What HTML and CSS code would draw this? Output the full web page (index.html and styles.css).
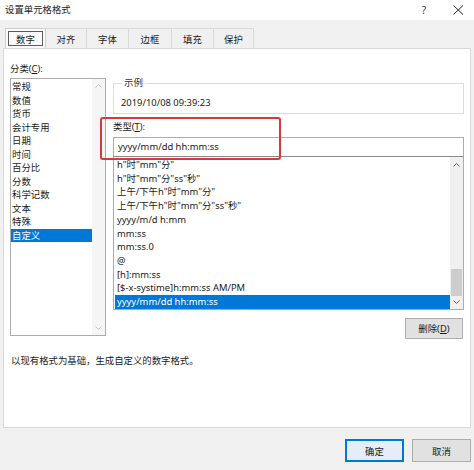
FILE: index.html
```html
<!DOCTYPE html>
<html lang="zh-CN">
<head>
    <meta charset="UTF-8">
    <title>设置单元格格式</title>
    <link rel="stylesheet" href="styles.css">
</head>
<body>
    <div class="dialog">
        <div class="titlebar">
            <span class="title">设置单元格格式</span>
            <span class="help">?</span>
            <svg class="close" width="11" height="10" viewBox="0 0 11 10"><path d="M0.5 0.5 L10 9.5 M10 0.5 L0.5 9.5" stroke="#222" stroke-width="1" fill="none"/></svg>
        </div>

        <div class="tabs">
            <div class="tab active" style="width:41px"><span>数字</span></div>
            <div class="tab" style="width:42px"><span>对齐</span></div>
            <div class="tab" style="width:43px"><span>字体</span></div>
            <div class="tab" style="width:44px"><span>边框</span></div>
            <div class="tab" style="width:43px"><span>填充</span></div>
            <div class="tab" style="width:41px"><span>保护</span></div>
        </div>

        <div class="panel">
            <div class="cols">
                <div class="left">
                    <div class="label">分类(<u>C</u>):</div>
                    <div class="listbox cat">
                        <ul class="items">
                            <li>常规</li>
                            <li>数值</li>
                            <li>货币</li>
                            <li>会计专用</li>
                            <li>日期</li>
                            <li>时间</li>
                            <li>百分比</li>
                            <li>分数</li>
                            <li>科学记数</li>
                            <li>文本</li>
                            <li>特殊</li>
                            <li class="sel">自定义</li>
                        </ul>
                        <div class="vscroll off">
                            <svg class="arrow" width="7" height="4" viewBox="0 0 7 4"><path d="M0.5 3.5 L3.5 0.5 L6.5 3.5" stroke="#c4c4c4" fill="none"/></svg>
                            <div class="track"></div>
                            <svg class="arrow" width="7" height="4" viewBox="0 0 7 4"><path d="M0.5 0.5 L3.5 3.5 L6.5 0.5" stroke="#c4c4c4" fill="none"/></svg>
                        </div>
                    </div>
                </div>

                <div class="right">
                    <fieldset class="sample">
                        <legend>示例</legend>
                        <div class="sample-val">2019/10/08 09:39:23</div>
                    </fieldset>

                    <div class="label type-label">类型(<u>T</u>):</div>
                    <div class="type-input">yyyy/mm/dd hh:mm:ss</div>

                    <div class="listbox fmt">
                        <ul class="items">
                            <li>h"时"mm"分"</li>
                            <li>h"时"mm"分"ss"秒"</li>
                            <li>上午/下午h"时"mm"分"</li>
                            <li>上午/下午h"时"mm"分"ss"秒"</li>
                            <li>yyyy/m/d h:mm</li>
                            <li>mm:ss</li>
                            <li>mm:ss.0</li>
                            <li>@</li>
                            <li>[h]:mm:ss</li>
                            <li>[$-x-systime]h:mm:ss AM/PM</li>
                            <li class="sel">yyyy/mm/dd hh:mm:ss</li>
                        </ul>
                        <div class="vscroll">
                            <svg class="arrow" width="7" height="4" viewBox="0 0 7 4"><path d="M0.5 3.5 L3.5 0.5 L6.5 3.5" stroke="#606060" fill="none"/></svg>
                            <div class="track"><div class="thumb"></div></div>
                            <svg class="arrow" width="7" height="4" viewBox="0 0 7 4"><path d="M0.5 0.5 L3.5 3.5 L6.5 0.5" stroke="#606060" fill="none"/></svg>
                        </div>
                    </div>

                    <div class="del-row">
                        <button class="btn del">删除(<u>D</u>)</button>
                    </div>
                </div>
            </div>

            <p class="desc">以现有格式为基础，生成自定义的数字格式。</p>

            <div class="annot"></div>
        </div>

        <div class="footer">
            <button class="btn ok">确定</button>
            <button class="btn">取消</button>
        </div>
    </div>
</body>
</html>
```

FILE: styles.css
```css
*{
    box-sizing: border-box;
}
body{
    margin: 0;
    background-color: #f0f0f0;
    font-family: "Noto Sans", "Noto Sans CJK SC", sans-serif;
    font-size: 9.4px;
    color: #1a1a1a;
}
u{
    text-decoration: underline;
    text-underline-offset: 1px;
}
.dialog{
    width: 474px;
    height: 470px;
}

/* title bar */
.titlebar{
    height: 20px;
    background-color: #fff;
    display: flex;
    align-items: center;
    padding: 0 10px 0 5px;
}
.title{
    flex: 1;
    line-height: 14px;
}
.help{
    font-size: 10px;
    margin-right: 27px;
    color: #333;
}
.close{
    display: block;
}

/* tabs */
.tabs{
    display: flex;
    padding: 8px 0 0 5px;
    height: 28px;
}
.tab{
    height: 20px;
    border: 1px solid #d9d9d9;
    border-bottom: none;
    margin-right: -1px;
    background-color: #f0f0f0;
    display: flex;
    align-items: center;
    justify-content: center;
}
.tab.active{
    background-color: #fafafa;
    border-color: #d0d0d0;
    padding: 2px;
    position: relative;
    z-index: 1;
}
.tab.active span{
    flex: 1;
    align-self: stretch;
    display: flex;
    align-items: center;
    justify-content: center;
    border: 1px solid #5a5a5a;
}

/* content panel */
.panel{
    position: relative;
    margin: 0 3px;
    height: 380px;
    background-color: #fff;
    border: 1px solid #d9d9d9;
    padding: 13px 6px 0 6px;
}
.cols{
    display: grid;
    grid-template-columns: 96px 351px;
    column-gap: 7px;
}
.label{
    line-height: 13px;
}
.listbox{
    display: flex;
    border: 1px solid #acacac;
    background-color: #fff;
}
.items{
    list-style: none;
    margin: 0;
    padding: 1px 0 0 0;
    flex: 1;
}
.items li{
    white-space: nowrap;
    padding-left: 1px;
}
.items li.sel{
    background-color: #0078d7;
    color: #fff;
}
.vscroll{
    width: 13px;
    background-color: #f0f0f0;
    display: flex;
    flex-direction: column;
    align-items: center;
}
.vscroll.off{
    background-color: #f5f5f5;
}
.arrow{
    display: block;
    margin: 5px 0;
}
.track{
    flex: 1;
    width: 100%;
    display: flex;
    flex-direction: column;
    justify-content: flex-end;
}
.thumb{
    height: 27px;
    margin: 0 1px;
    background-color: #cdcdcd;
}

/* category list */
.cat{
    margin-top: 3px;
    height: 258px;
}
.cat .items li{
    line-height: 13.5px;
}

/* right column */
.right{
    margin-top: 15px;
}
.sample{
    margin: 0;
    border: 1px solid #dcdcdc;
    padding: 7px 7px 4px 7px;
}
.sample legend{
    padding: 0 2px;
    margin-left: 1px;
    line-height: 12px;
    color: #333;
}
.sample-val{
    line-height: 13px;
}
.type-label{
    margin-top: 6px;
}
.type-input{
    margin-top: 4px;
    height: 20px;
    line-height: 18px;
    border: 1px solid #acacac;
    border-bottom-color: #8a8a8a;
    padding-left: 4px;
}
.fmt{
    border-top: none;
}
.fmt .items{
    padding-top: 1px;
}
.fmt .items li{
    line-height: 13.7px;
    padding-left: 3px;
}
.fmt .items li.sel{
    padding-left: 2px;
    margin-left: 1px;
}
.fmt .vscroll .arrow{
    margin: 6px 0 4px;
}
.fmt .vscroll .arrow:last-child{
    margin: 4px 0 5px;
}
.del-row{
    display: flex;
    justify-content: flex-end;
    margin-top: 8px;
    padding-right: 1px;
}

/* buttons */
.btn{
    font-family: inherit;
    font-size: 9.4px;
    color: #1a1a1a;
    background-color: #e1e1e1;
    border: 1px solid #adadad;
    height: 23px;
    width: 59px;
    padding: 0;
}
.btn.del{
    height: 21px;
    width: 58px;
}
.btn.ok{
    border-color: #0078d7;
    box-shadow: inset 0 0 0 1px #0078d7;
    background-color: #e5eef6;
}

.desc{
    margin: 15px 0 0 0;
    line-height: 13px;
    padding-left: 1px;
}

/* red highlight drawn over the type field */
.annot{
    position: absolute;
    left: 96px;
    top: 68px;
    width: 181px;
    height: 43px;
    border: 2px solid #d8383c;
    border-radius: 3px;
}

.footer{
    display: flex;
    justify-content: flex-end;
    gap: 8px;
    padding: 11px 3px 0 0;
}
```
